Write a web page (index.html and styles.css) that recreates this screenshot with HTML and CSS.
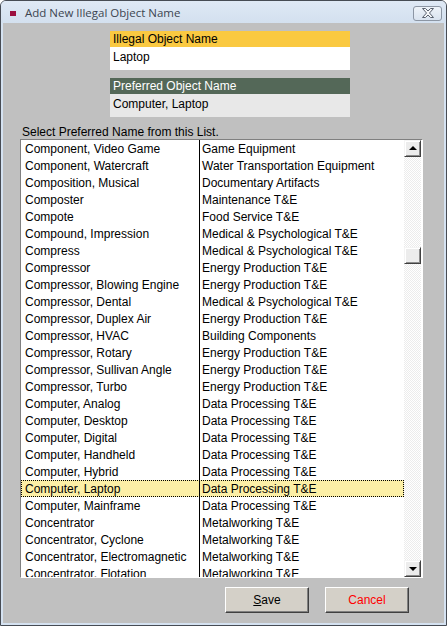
FILE: index.html
```html
<!DOCTYPE html>
<html>
<head>
<meta charset="utf-8">
<link rel="stylesheet" href="styles.css">
</head>
<body>
<div class="window">
  <div class="titlebar">
    <span class="app-icon"></span>
    <span class="title">Add New Illegal Object Name</span>
    <span class="close-btn">
      <svg width="14" height="10" viewBox="0 0 14 10">
        <path d="M1.5 0.5 H4.5 L7 3 L9.5 0.5 H12.5 L8.5 5 L12.5 9.5 H9.5 L7 7 L4.5 9.5 H1.5 L5.5 5 Z" fill="#f4f6f8" stroke="#5a6270" stroke-width="1" stroke-linejoin="round"/>
      </svg>
    </span>
  </div>
  <div class="body">
    <div class="fields">
      <div class="field-head illegal">Illegal Object Name</div>
      <div class="field-box white">Laptop</div>
      <div class="field-head preferred">Preferred Object Name</div>
      <div class="field-box grey">Computer, Laptop</div>
    </div>
    <div class="list-label">Select Preferred Name from this List.</div>
    <div class="listbox">
      <div class="rows">
        <div class="row"><span class="c1">Component, Video Game</span><span class="c2">Game Equipment</span></div>
        <div class="row"><span class="c1">Component, Watercraft</span><span class="c2">Water Transportation Equipment</span></div>
        <div class="row"><span class="c1">Composition, Musical</span><span class="c2">Documentary Artifacts</span></div>
        <div class="row"><span class="c1">Composter</span><span class="c2">Maintenance T&amp;E</span></div>
        <div class="row"><span class="c1">Compote</span><span class="c2">Food Service T&amp;E</span></div>
        <div class="row"><span class="c1">Compound, Impression</span><span class="c2">Medical &amp; Psychological T&amp;E</span></div>
        <div class="row"><span class="c1">Compress</span><span class="c2">Medical &amp; Psychological T&amp;E</span></div>
        <div class="row"><span class="c1">Compressor</span><span class="c2">Energy Production T&amp;E</span></div>
        <div class="row"><span class="c1">Compressor, Blowing Engine</span><span class="c2">Energy Production T&amp;E</span></div>
        <div class="row"><span class="c1">Compressor, Dental</span><span class="c2">Medical &amp; Psychological T&amp;E</span></div>
        <div class="row"><span class="c1">Compressor, Duplex Air</span><span class="c2">Energy Production T&amp;E</span></div>
        <div class="row"><span class="c1">Compressor, HVAC</span><span class="c2">Building Components</span></div>
        <div class="row"><span class="c1">Compressor, Rotary</span><span class="c2">Energy Production T&amp;E</span></div>
        <div class="row"><span class="c1">Compressor, Sullivan Angle</span><span class="c2">Energy Production T&amp;E</span></div>
        <div class="row"><span class="c1">Compressor, Turbo</span><span class="c2">Energy Production T&amp;E</span></div>
        <div class="row"><span class="c1">Computer, Analog</span><span class="c2">Data Processing T&amp;E</span></div>
        <div class="row"><span class="c1">Computer, Desktop</span><span class="c2">Data Processing T&amp;E</span></div>
        <div class="row"><span class="c1">Computer, Digital</span><span class="c2">Data Processing T&amp;E</span></div>
        <div class="row"><span class="c1">Computer, Handheld</span><span class="c2">Data Processing T&amp;E</span></div>
        <div class="row"><span class="c1">Computer, Hybrid</span><span class="c2">Data Processing T&amp;E</span></div>
        <div class="row selected"><span class="c1">Computer, Laptop</span><span class="c2">Data Processing T&amp;E</span></div>
        <div class="row"><span class="c1">Computer, Mainframe</span><span class="c2">Data Processing T&amp;E</span></div>
        <div class="row"><span class="c1">Concentrator</span><span class="c2">Metalworking T&amp;E</span></div>
        <div class="row"><span class="c1">Concentrator, Cyclone</span><span class="c2">Metalworking T&amp;E</span></div>
        <div class="row"><span class="c1">Concentrator, Electromagnetic</span><span class="c2">Metalworking T&amp;E</span></div>
        <div class="row"><span class="c1">Concentrator, Flotation</span><span class="c2">Metalworking T&amp;E</span></div>
      </div>
      <div class="scrollbar">
        <div class="sb-btn"><span class="arrow up"></span></div>
        <div class="sb-track">
          <div class="sb-thumb"></div>
        </div>
        <div class="sb-btn"><span class="arrow down"></span></div>
      </div>
    </div>
    <div class="buttons">
      <button class="btn"><u>S</u>ave</button>
      <button class="btn cancel">Cancel</button>
    </div>
  </div>
</div>
</body>
</html>
```

FILE: styles.css
```css
html, body {
  margin: 0;
  padding: 0;
}
body {
  width: 447px;
  height: 626px;
  overflow: hidden;
  background: #ffffff;
  font-family: "Liberation Sans", Arial, sans-serif;
  font-size: 12px;
  color: #000;
}
.window {
  box-sizing: border-box;
  width: 447px;
  height: 626px;
  border: 1px solid #474c54;
  border-radius: 6px 6px 0 0;
  background: #d5e2f1;
  padding: 0 2px 2px 2px;
  display: flex;
  flex-direction: column;
}
.titlebar {
  height: 22px;
  flex: 0 0 22px;
  display: flex;
  align-items: center;
  background: linear-gradient(#dfe9f5, #d3e0ef);
  margin: 0 -2px;
  padding: 0 2px;
  border-radius: 5px 5px 0 0;
}
.app-icon {
  width: 6px;
  height: 5px;
  background: #9c1040;
  margin-left: 7px;
  margin-top: 3px;
}
.title {
  margin-left: 9px;
  font-family: "Open Sans", "Noto Sans", sans-serif;
  font-size: 11.5px;
  color: #3c4550;
  margin-top: 1px;
  flex: 1;
}
.close-btn {
  box-sizing: border-box;
  width: 29px;
  height: 15px;
  border: 1px solid #8c96a4;
  border-radius: 3px;
  background: linear-gradient(#eef3f9, #d9e3ef);
  display: flex;
  align-items: center;
  justify-content: center;
  margin-right: 2px;
  margin-top: 2px;
}
.body {
  flex: 1;
  background: #c0c0c0;
  padding-top: 8px;
  display: flex;
  flex-direction: column;
}
.fields {
  margin-left: 107px;
  width: 240px;
}
.field-head {
  height: 16px;
  line-height: 16px;
  padding-left: 3px;
}
.illegal {
  background: #fac941;
  color: #000;
}
.preferred {
  background: #546858;
  color: #fff;
  margin-top: 8px;
}
.field-box {
  height: 23px;
  line-height: 20px;
  padding-left: 3px;
}
.white { background: #ffffff; }
.grey { background: #e8e8e8; }
.list-label {
  margin-left: 19px;
  margin-top: 8px;
  height: 14px;
  line-height: 14px;
}
.listbox {
  box-sizing: border-box;
  margin-left: 17px;
  width: 403px;
  height: 439px;
  border-top: 1px solid #808080;
  border-left: 1px solid #808080;
  border-right: 1px solid #ffffff;
  border-bottom: 1px solid #ffffff;
  background: #fff;
  display: flex;
  overflow: hidden;
}
.rows {
  width: 383px;
  display: flex;
  flex-direction: column;
  overflow: hidden;
}
.row {
  flex: 0 0 17px;
  height: 17px;
  line-height: 16px;
  display: flex;
  white-space: nowrap;
}
.c1 {
  width: 174px;
  padding-left: 4px;
  padding-top: 1px;
  border-right: 1px solid #000;
  overflow: hidden;
}
.c2 {
  flex: 1;
  padding-left: 2px;
  padding-top: 1px;
  overflow: hidden;
}
.row.selected {
  background: #fcefa6;
  outline: 1px dotted #000;
  outline-offset: -1px;
}
.scrollbar {
  width: 17px;
  display: flex;
  flex-direction: column;
}
.sb-btn, .sb-thumb {
  box-sizing: border-box;
  width: 17px;
  height: 17px;
  flex: 0 0 17px;
  background: #ececec;
  border-top: 1px solid #f4f4f4;
  border-left: 1px solid #f4f4f4;
  border-right: 1px solid #404040;
  border-bottom: 1px solid #404040;
  box-shadow: inset 1px 1px 0 #ffffff, inset -1px -1px 0 #8c8c8c;
  display: flex;
  align-items: center;
  justify-content: center;
}
.sb-track {
  flex: 1;
  background-color: #ffffff;
  background-image: repeating-conic-gradient(#ececec 0 25%, #ffffff 0 50%);
  background-size: 2px 2px;
  padding-top: 90px;
}
.arrow {
  width: 0;
  height: 0;
  border-left: 4px solid transparent;
  border-right: 4px solid transparent;
}
.arrow.up {
  border-bottom: 4px solid #000;
  margin-top: -1px;
}
.arrow.down {
  border-top: 4px solid #000;
}
.buttons {
  display: flex;
  justify-content: flex-end;
  gap: 16px;
  padding-right: 35px;
  margin-top: 9px;
}
.btn {
  box-sizing: border-box;
  width: 84px;
  height: 26px;
  padding: 0;
  margin: 0;
  background: #d4d0c8;
  font-family: "Liberation Sans", Arial, sans-serif;
  font-size: 12px;
  color: #000;
  border-top: 1px solid #ffffff;
  border-left: 1px solid #ffffff;
  border-right: 1px solid #404040;
  border-bottom: 1px solid #404040;
  box-shadow: inset -1px -1px 0 #808080;
}
.btn.cancel {
  color: #ff0000;
}
```
